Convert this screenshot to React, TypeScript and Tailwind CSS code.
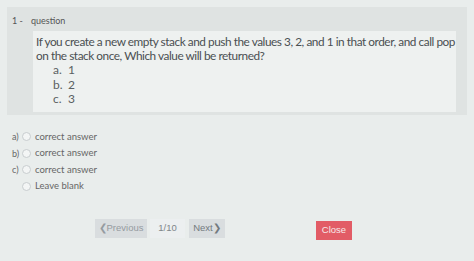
import React from 'react';

const answers = [
  { key: 'a)', label: 'correct answer' },
  { key: 'b)', label: 'correct answer' },
  { key: 'c)', label: 'correct answer' },
  { key: '', label: 'Leave blank' },
];

const options = [
  { key: 'a.', value: '1' },
  { key: 'b.', value: '2' },
  { key: 'c.', value: '3' },
];

export default function App() {
  return (
    <div className="w-[474px] h-[261px] overflow-hidden bg-[#e9edec] font-['Lato',sans-serif] text-[#4a4f52] flex flex-col">
      {/* Question panel */}
      <div className="mt-[7px] mx-[7px] h-[108px] bg-[#dfe3e2] flex flex-col">
        <div className="flex items-center h-[24px] pt-[4px] text-[9px] text-[#555]">
          <span className="w-[24px] pl-[5px]">1 -</span>
          <span>question</span>
        </div>
        <div className="ml-[26px] mr-[11px] bg-[#eef1f0] pl-[3px] pt-[4px] h-[81px]">
          <p className="text-[11.8px] leading-[14px] tracking-[-0.45px] text-[#4a4f52] whitespace-nowrap">
            If you create a new empty stack and push the values 3, 2, and 1 in that order, and call pop
            <br />
            on the stack once, Which value will be returned?
          </p>
          <div className="pl-[17px] text-[12px] leading-[14.5px] text-[#5a5f62]">
            {options.map((o) => (
              <div key={o.key} className="flex gap-[6px]">
                <span className="w-[9px]">{o.key}</span>
                <span>{o.value}</span>
              </div>
            ))}
          </div>
        </div>
      </div>

      {/* Answers */}
      <div className="mt-[15px] pl-[12px] flex flex-col gap-[3px] text-[9px] text-[#666]">
        {answers.map((a, i) => (
          <div key={i} className="flex items-center h-[13.5px]">
            <span className="w-[10px]">{a.key}</span>
            <span className="w-[9px] h-[9px] rounded-full border border-[#c8cdcf] bg-[#f3f5f5] mr-[4px]" />
            <span className="text-[9.5px]">{a.label}</span>
          </div>
        ))}
      </div>

      {/* Navigation */}
      <div className="mt-[23px] flex items-center font-['Liberation_Sans',sans-serif] text-[9.5px]">
        <div className="ml-[95px] w-[52px] h-[19px] bg-[#d9dddf] text-[#959b9f] flex items-center justify-center">
          &#10094;Previous
        </div>
        <div className="ml-[3px] w-[35px] h-[19px] bg-[#eceff0] text-[#80868a] flex items-center justify-center">
          1/10
        </div>
        <div className="ml-[4px] w-[36px] h-[19px] bg-[#d9dddf] text-[#737a7e] flex items-center justify-center">
          Next&#10095;
        </div>
        <div className="ml-[91px] mt-[5px] w-[36px] h-[19px] bg-[#e25c66] text-[#f6e9ea] flex items-center justify-center">
          Close
        </div>
      </div>
    </div>
  );
}
